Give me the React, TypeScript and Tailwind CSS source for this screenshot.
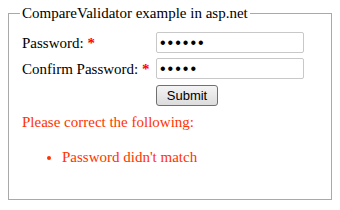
import React from 'react';

function Required() {
  return <span className="text-[#ff0000] font-bold"> *</span>;
}

const inputCls =
  "h-[21px] w-[148px] border border-[#c8c8c8] rounded-[2px] px-[3px] font-['Liberation_Sans',Arial,sans-serif] text-[16px] tracking-[2px] text-black outline-none";

export default function App(): React.ReactElement {
  return (
    <div className="w-[340px] h-[210px] bg-white pt-[4px] pl-[8px] font-['Liberation_Serif','Times_New_Roman',serif] text-[15px] leading-[18px] text-black">
      <fieldset className="w-[324px] h-[196px] border border-[#a9a9a9] pl-[11px] pr-[11px]">
        <legend className="px-[2px] leading-[18px]">CompareValidator example in asp.net</legend>
        <div className="pl-[2px] mt-[10px]">
          <div className="grid grid-cols-[134px_148px] gap-y-[5px] items-center">
            <label className="whitespace-nowrap">
              Password:<Required />
            </label>
            <input type="password" readOnly defaultValue="123456" className={inputCls} />
            <label className="whitespace-nowrap">
              Confirm Password:<Required />
            </label>
            <input type="password" readOnly defaultValue="12345" className={inputCls} />
            <div />
            <button className="mt-[1px] h-[21px] w-[62px] border border-[#707070] rounded-[3px] bg-gradient-to-b from-[#f4f4f4] to-[#dcdcdc] font-['Liberation_Sans',Arial,sans-serif] text-[13px] leading-[19px] text-black">
              Submit
            </button>
          </div>
          <div className="mt-[7px] text-[#ff3300]">
            <div>Please correct the following:</div>
            <ul className="list-disc pl-[40px] my-[17px]">
              <li>Password didn't match</li>
            </ul>
          </div>
        </div>
      </fieldset>
    </div>
  );
}
